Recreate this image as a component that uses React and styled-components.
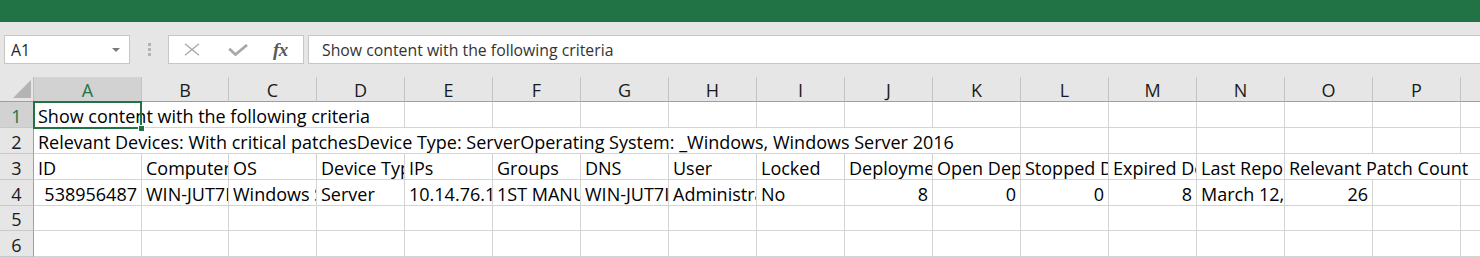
import React from 'react';
import styled, { createGlobalStyle } from 'styled-components';

const GlobalStyle = createGlobalStyle`
  html, body { margin: 0; padding: 0; background: #e6e6e6; overflow: hidden; }
  body { width: 1480px; height: 257px; font-family: "Open Sans", "Noto Sans", sans-serif; }
`;

const Window = styled.div`
  width: 1480px;
  height: 257px;
  overflow: hidden;
  background: #e6e6e6;
  display: flex;
  flex-direction: column;
`;

const TitleBar = styled.div`
  flex: none;
  height: 22px;
  background: #217346;
`;

const FormulaRow = styled.div`
  flex: none;
  display: flex;
  align-items: center;
  height: 29px;
  margin-top: 13px;
  padding-left: 4px;
`;

const NameBox = styled.div`
  flex: none;
  width: 126px;
  height: 29px;
  box-sizing: border-box;
  border: 1px solid #c6c6c6;
  background: #fff;
  display: flex;
  align-items: center;
  justify-content: space-between;
  padding: 0 9px 0 6px;
  font-size: 15.8px;
  color: #262626;
`;

const Caret = styled.span`
  width: 0;
  height: 0;
  border-left: 4px solid transparent;
  border-right: 4px solid transparent;
  border-top: 4px solid #7a7a7a;
`;

const Grip = styled.div`
  flex: none;
  display: flex;
  flex-direction: column;
  gap: 2px;
  margin: 0 17px 0 18px;
`;

const GripDot = styled.span`
  width: 3px;
  height: 3px;
  background: #b3b3b3;
`;

const FnBox = styled.div`
  flex: none;
  width: 136px;
  height: 29px;
  box-sizing: border-box;
  border: 1px solid #c6c6c6;
  background: #fff;
  display: flex;
  align-items: center;
  padding-left: 14px;
`;

const IconSlot = styled.span`
  display: flex;
  align-items: center;
  margin-left: ${(p) => p.$gap || 0}px;
`;

const Fx = styled.span`
  margin-left: 25px;
  font-family: "Liberation Serif", serif;
  font-style: italic;
  font-weight: bold;
  font-size: 19px;
  color: #595959;
  letter-spacing: -0.5px;
  line-height: 1;
`;

const FormulaInput = styled.div`
  flex: 1;
  margin-left: 4px;
  margin-right: -2px;
  height: 29px;
  box-sizing: border-box;
  border: 1px solid #c6c6c6;
  background: #fff;
  display: flex;
  align-items: center;
  padding-left: 13px;
  font-size: 15.8px;
  color: #333;
  white-space: nowrap;
`;

const COLS = [108, 87, 88, 88, 88, 88, 88, 88, 88, 88, 88, 88, 88, 88, 88, 88, 88];
const LETTERS = 'ABCDEFGHIJKLMNOPQ'.split('');

const Sheet = styled.div`
  flex: none;
  position: relative;
  margin-top: 13px;
  display: grid;
  grid-template-columns: 34px ${COLS.map((w) => `${w}px`).join(' ')};
  grid-template-rows: 25px 26px 26px 26px 26px 25px 26px;
  font-family: "Open Sans", "Noto Sans", sans-serif;
  font-size: 18px;
  color: #000;
`;

const Corner = styled.div`
  position: relative;
  box-sizing: border-box;
  border-right: 1px solid #bdbdbd;
  border-bottom: 1px solid #9f9f9f;
  background: #e6e6e6;
`;

const CornerMark = styled.svg`
  position: absolute;
  left: 0;
  top: 0;
`;

const ColHead = styled.div`
  box-sizing: border-box;
  border-right: 1px solid #c3c3c3;
  border-bottom: 1px solid #9f9f9f;
  background: ${(p) => (p.$selected ? '#d2d2d2' : '#e6e6e6')};
  color: ${(p) => (p.$selected ? '#217346' : '#1a1a1a')};
  display: flex;
  align-items: center;
  justify-content: center;
  padding-top: 1px;
  font-size: 18px;
`;

const RowHead = styled.div`
  box-sizing: border-box;
  border-right: 1px solid #9f9f9f;
  border-bottom: 1px solid #c8c8c8;
  background: ${(p) => (p.$selected ? '#d2d2d2' : '#e6e6e6')};
  color: ${(p) => (p.$selected ? '#217346' : '#1a1a1a')};
  display: flex;
  align-items: flex-end;
  justify-content: center;
  padding-bottom: 1px;
  line-height: 20px;
  font-size: 18px;
`;

const Cell = styled.div`
  grid-column: span ${(p) => p.$span || 1};
  box-sizing: border-box;
  border-right: 1px solid #d4d4d4;
  border-bottom: 1px solid #d4d4d4;
  background: #fff;
  display: flex;
  align-items: flex-end;
  justify-content: ${(p) => (p.$right ? 'flex-end' : 'flex-start')};
  padding: 0 4px 1px 4px;
  line-height: 20px;
  white-space: nowrap;
  overflow: hidden;
  min-width: 0;
`;

const Selection = styled.div`
  position: absolute;
  left: 33px;
  top: 24px;
  width: 109px;
  height: 28px;
  box-sizing: border-box;
  border: 2px solid #217346;
  pointer-events: none;
`;

const Handle = styled.span`
  position: absolute;
  left: 103px;
  top: 22px;
  width: 7px;
  height: 7px;
  box-sizing: border-box;
  border: 1px solid #fff;
  background: #217346;
`;

const ROWS = [
  [{ t: 'Show content with the following criteria', span: 4 }],
  [
    {
      t: 'Relevant Devices: With critical patchesDevice Type: ServerOperating System: _Windows, Windows Server 2016',
      span: 11,
    },
  ],
  [
    { t: 'ID' },
    { t: 'Computer Name' },
    { t: 'OS' },
    { t: 'Device Type' },
    { t: 'IPs' },
    { t: 'Groups' },
    { t: 'DNS' },
    { t: 'User' },
    { t: 'Locked' },
    { t: 'Deployments' },
    { t: 'Open Deployments' },
    { t: 'Stopped Deployments' },
    { t: 'Expired Deployments' },
    { t: 'Last Report' },
    { t: 'Relevant Patch Count', span: 3 },
  ],
  [
    { t: '538956487', right: true },
    { t: 'WIN-JUT7IB3K8QF' },
    { t: 'Windows Server 2016' },
    { t: 'Server' },
    { t: '10.14.76.112' },
    { t: '1ST MANUAL' },
    { t: 'WIN-JUT7IB3K8QF' },
    { t: 'Administrator' },
    { t: 'No' },
    { t: '8', right: true },
    { t: '0', right: true },
    { t: '0', right: true },
    { t: '8', right: true },
    { t: 'March 12, 2019 10:42 AM' },
    { t: '26', right: true },
    { t: '' },
    { t: '' },
  ],
  [],
  [],
];

function fillRow(cells) {
  const used = cells.reduce((s, c) => s + (c.span || 1), 0);
  const out = [...cells];
  for (let i = used; i < COLS.length; i += 1) out.push({ t: '' });
  return out;
}

function XIcon() {
  return (
    <svg width="16" height="13" viewBox="0 0 16 13">
      <path d="M1 0.8 L15 12.2 M15 0.8 L1 12.2" stroke="#a8a8a8" strokeWidth="1.3" fill="none" />
    </svg>
  );
}

function CheckIcon() {
  return (
    <svg width="20" height="12" viewBox="0 0 20 12">
      <path d="M1.2 4.8 L7.5 10.5 L19 1" stroke="#a8a8a8" strokeWidth="2.8" fill="none" strokeLinejoin="miter" />
    </svg>
  );
}

export default function App() {
  return (
    <>
      <GlobalStyle />
      <Window>
        <TitleBar />
        <FormulaRow>
          <NameBox>
            <span>A1</span>
            <Caret />
          </NameBox>
          <Grip>
            <GripDot />
            <GripDot />
            <GripDot />
          </Grip>
          <FnBox>
            <IconSlot $gap={1}>
              <XIcon />
            </IconSlot>
            <IconSlot $gap={28}>
              <CheckIcon />
            </IconSlot>
            <Fx>fx</Fx>
          </FnBox>
          <FormulaInput>Show content with the following criteria</FormulaInput>
        </FormulaRow>
        <Sheet>
          <Corner>
            <CornerMark width="34" height="25" viewBox="0 0 34 25">
              <polygon points="13,21 31,3 31,21" fill="#b4b4b4" />
            </CornerMark>
          </Corner>
          {LETTERS.map((l, i) => (
            <ColHead key={l} $selected={i === 0}>
              {l}
            </ColHead>
          ))}
          {ROWS.map((cells, r) => (
            <React.Fragment key={r}>
              <RowHead $selected={r === 0}>{r + 1}</RowHead>
              {fillRow(cells).map((c, i) => (
                <Cell key={i} $span={c.span} $right={c.right}>
                  {c.t}
                </Cell>
              ))}
            </React.Fragment>
          ))}
          <Selection>
            <Handle />
          </Selection>
        </Sheet>
      </Window>
    </>
  );
}
